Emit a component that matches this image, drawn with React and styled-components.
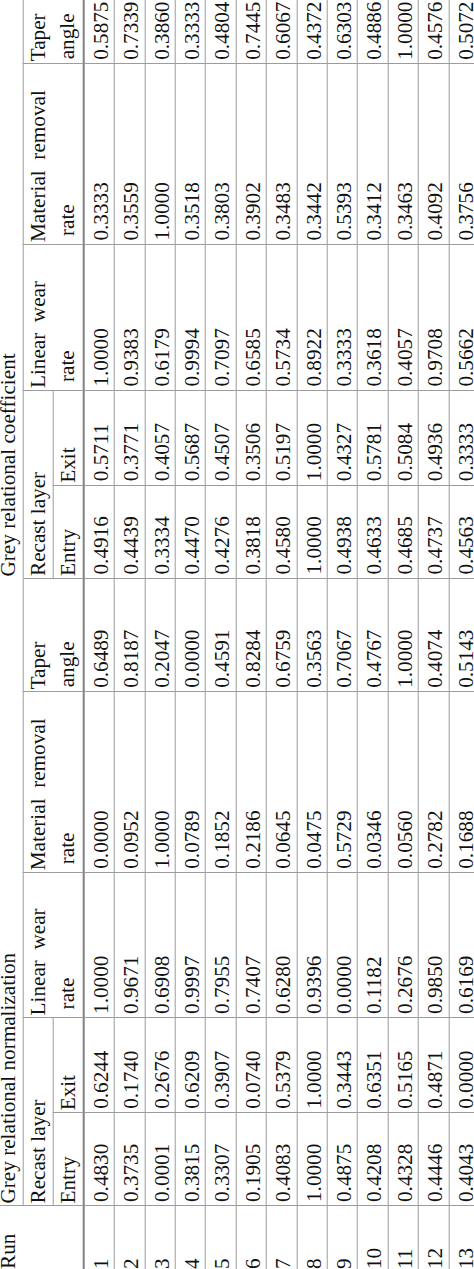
import React from 'react';
import styled, { createGlobalStyle } from 'styled-components';

const GlobalStyle = createGlobalStyle`
  html, body {
    margin: 0;
    padding: 0;
    background: #ffffff;
  }
  body {
    width: 474px;
    height: 1269px;
    overflow: hidden;
  }
`;

// the table is printed sideways: its left edge sits at the bottom of the page
const Frame = styled.div`
  width: 474px;
  height: 1269px;
  overflow: hidden;
  background: #ffffff;
`;

const Table = styled.table`
  border-collapse: collapse;
  table-layout: fixed;
  width: ${(p) => p.$width}px;
  transform-origin: 0 0;
  transform: translate(-7.3px, 1272px) rotate(-90deg);
  font-family: 'Liberation Serif', 'Times New Roman', serif;
  font-size: 21.2px;
  color: #111111;
  background: #ffffff;
`;

const Col = styled.col`
  width: ${(p) => p.$w}px;
`;

const HeadRow = styled.tr`
  height: 30px;
`;

const BodyRow = styled.tr`
  height: 30.4px;
`;

const HeadCell = styled.th`
  font-weight: 400;
  text-align: left;
  vertical-align: top;
  white-space: nowrap;
  line-height: 29px;
  padding: 0 2px;
  border: 1px solid #9c9c9c;
  border-bottom: ${(p) => (p.$last ? '2px solid #808080' : '1px solid #9c9c9c')};
`;

const GroupCell = styled(HeadCell)`
  border-left: none;
  border-right: none;
  border-top: none;
`;

const Line = styled.span`
  display: block;
  padding-left: ${(p) => p.$indent || 0}px;
`;

const Cell = styled.td`
  white-space: nowrap;
  vertical-align: top;
  line-height: 25.2px;
  padding: 4px 3.5px 0;
  border: 1px solid #9c9c9c;
`;

const RunCell = styled(Cell)`
  padding-left: 2px;
`;

const widths = [65.5, 93.2, 94.9, 145.2, 180.9, 113.3, 93.3, 94.7, 146, 180.7, 113];

const rows = [
  ['0.4830', '0.6244', '1.0000', '0.0000', '0.6489', '0.4916', '0.5711', '1.0000', '0.3333', '0.5875'],
  ['0.3735', '0.1740', '0.9671', '0.0952', '0.8187', '0.4439', '0.3771', '0.9383', '0.3559', '0.7339'],
  ['0.0001', '0.2676', '0.6908', '1.0000', '0.2047', '0.3334', '0.4057', '0.6179', '1.0000', '0.3860'],
  ['0.3815', '0.6209', '0.9997', '0.0789', '0.0000', '0.4470', '0.5687', '0.9994', '0.3518', '0.3333'],
  ['0.3307', '0.3907', '0.7955', '0.1852', '0.4591', '0.4276', '0.4507', '0.7097', '0.3803', '0.4804'],
  ['0.1905', '0.0740', '0.7407', '0.2186', '0.8284', '0.3818', '0.3506', '0.6585', '0.3902', '0.7445'],
  ['0.4083', '0.5379', '0.6280', '0.0645', '0.6759', '0.4580', '0.5197', '0.5734', '0.3483', '0.6067'],
  ['1.0000', '1.0000', '0.9396', '0.0475', '0.3563', '1.0000', '1.0000', '0.8922', '0.3442', '0.4372'],
  ['0.4875', '0.3443', '0.0000', '0.5729', '0.7067', '0.4938', '0.4327', '0.3333', '0.5393', '0.6303'],
  ['0.4208', '0.6351', '0.1182', '0.0346', '0.4767', '0.4633', '0.5781', '0.3618', '0.3412', '0.4886'],
  ['0.4328', '0.5165', '0.2676', '0.0560', '1.0000', '0.4685', '0.5084', '0.4057', '0.3463', '1.0000'],
  ['0.4446', '0.4871', '0.9850', '0.2782', '0.4074', '0.4737', '0.4936', '0.9708', '0.4092', '0.4576'],
  ['0.4043', '0.0000', '0.6169', '0.1688', '0.5143', '0.4563', '0.3333', '0.5662', '0.3756', '0.5072'],
];

const groups = ['Grey relational normalization', 'Grey relational coefficient'];

function GroupHeads() {
  return groups.map((g) => (
    <React.Fragment key={g}>
      <HeadCell colSpan={2}>Recast layer</HeadCell>
      <HeadCell rowSpan={2} $last>
        <Line>Linear&nbsp;&nbsp;wear</Line>
        <Line $indent={6}>rate</Line>
      </HeadCell>
      <HeadCell rowSpan={2} $last>
        <Line>Material&nbsp;&nbsp;removal</Line>
        <Line $indent={6}>rate</Line>
      </HeadCell>
      <HeadCell rowSpan={2} $last>
        <Line>Taper</Line>
        <Line $indent={2}>angle</Line>
      </HeadCell>
    </React.Fragment>
  ));
}

export default function App() {
  const total = widths.reduce((a, b) => a + b, 0);
  return (
    <Frame>
      <GlobalStyle />
      <Table $width={total}>
        <colgroup>
          {widths.map((w, i) => (
            <Col key={i} $w={w} />
          ))}
        </colgroup>
        <thead>
          <HeadRow>
            <HeadCell rowSpan={3} $last>Run</HeadCell>
            {groups.map((g) => (
              <GroupCell key={g} colSpan={5}>{g}</GroupCell>
            ))}
          </HeadRow>
          <HeadRow>
            <GroupHeads />
          </HeadRow>
          <HeadRow>
            <HeadCell $last>Entry</HeadCell>
            <HeadCell $last>Exit</HeadCell>
            <HeadCell $last>Entry</HeadCell>
            <HeadCell $last>Exit</HeadCell>
          </HeadRow>
        </thead>
        <tbody>
          {rows.map((r, i) => (
            <BodyRow key={i}>
              <RunCell>{i + 1}</RunCell>
              {r.map((v, j) => (
                <Cell key={j}>{v}</Cell>
              ))}
            </BodyRow>
          ))}
        </tbody>
      </Table>
    </Frame>
  );
}
